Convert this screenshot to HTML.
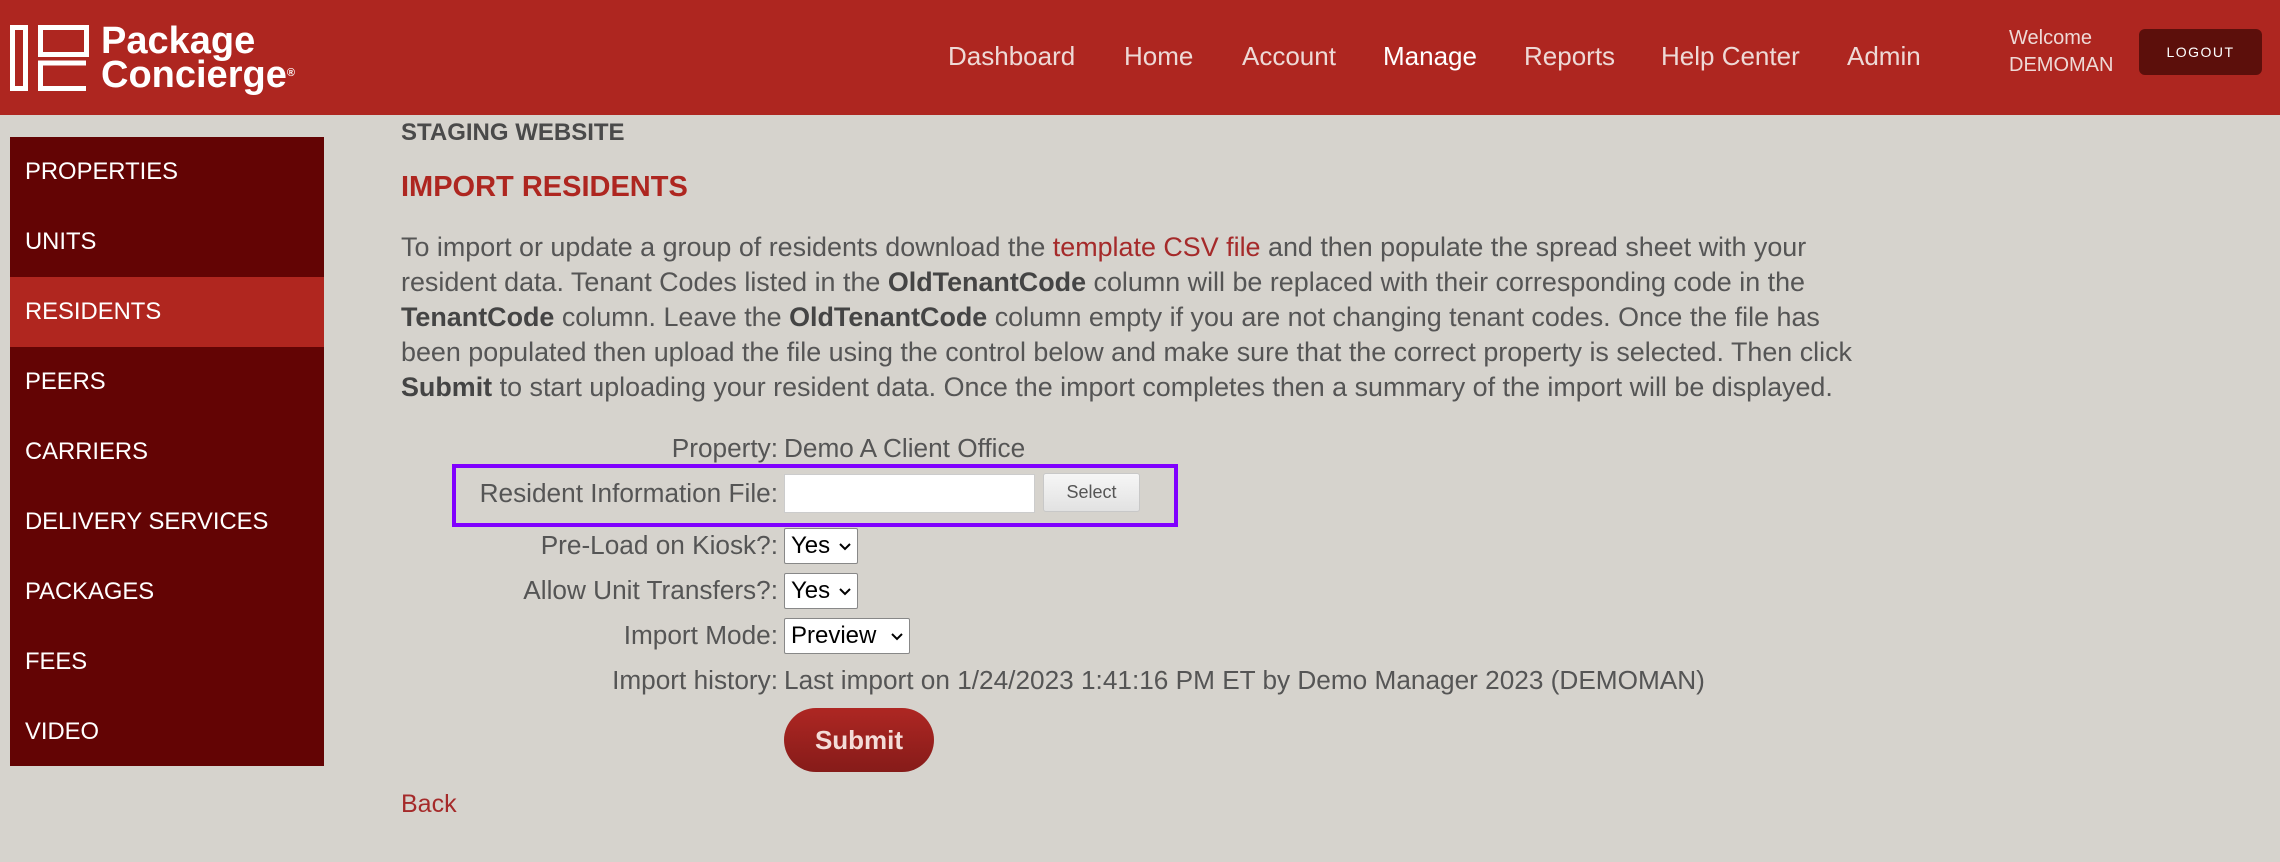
<!DOCTYPE html>
<html><head><meta charset="utf-8"><style>
*{margin:0;padding:0;box-sizing:border-box}
body{width:2280px;height:862px;background:#d6d3cd;font-family:"Liberation Sans",sans-serif;position:relative;overflow:hidden;color:#555}
.hdr{position:absolute;left:0;top:0;width:2280px;height:115px;background:#ae2620}
.a{position:absolute;white-space:nowrap}
.nav{font-size:26px;color:#eed9d6;top:41px}
.side{position:absolute;left:10px;top:137px;width:314px;height:629px;background:#630404}
.side div{height:70px;line-height:70px;padding-left:15px;color:#fff;font-size:23.8px}
.side .on{background:#b0261f}
p.t{position:absolute;left:401px;top:230px;width:1465px;font-size:26.9px;line-height:35px;color:#555}
p.t b{color:#444}
.lbl{font-size:26.2px;color:#555;text-align:right;right:1502px}
.val{font-size:26.2px;color:#555;left:784px}
.sel{position:absolute;left:784px;background:#fff;border:1px solid #888;border-radius:2px;height:36px;font-size:24px;color:#000;line-height:34px;padding-left:6px}
.sel svg{position:absolute;right:6px;top:14px}
</style></head><body>
<div class="hdr">
<svg class="a" style="left:10px;top:25px" width="80" height="66" viewBox="0 0 80 66" fill="none" stroke="#fff" stroke-width="5">
<rect x="2.5" y="2.5" width="13" height="61"/><rect x="30.5" y="2.5" width="46" height="27"/><path d="M76 38H30.5V63.5H76"/></svg>
<div class="a" style="left:101px;top:24px;font-size:38px;font-weight:bold;color:#fff;line-height:34px">Package<br>Concierge<sup style="font-size:11px;vertical-align:top;position:relative;top:-2px">®</sup></div>
<div class="a nav" style="left:948px">Dashboard</div>
<div class="a nav" style="left:1124px">Home</div>
<div class="a nav" style="left:1242px">Account</div>
<div class="a nav" style="left:1383px;color:#fff">Manage</div>
<div class="a nav" style="left:1524px">Reports</div>
<div class="a nav" style="left:1661px">Help Center</div>
<div class="a nav" style="left:1847px">Admin</div>
<div class="a" style="left:2009px;top:25px;font-size:20px;line-height:27px;color:#eed9d6">Welcome<br>DEMOMAN</div>
<div class="a" style="left:2139px;top:29px;width:123px;height:46px;background:#5c0f0b;border-radius:6px;color:#fff;font-size:14px;letter-spacing:1.5px;text-align:center;line-height:46px">LOGOUT</div>
</div>
<div class="side"><div>PROPERTIES</div><div>UNITS</div><div class="on">RESIDENTS</div><div>PEERS</div><div>CARRIERS</div><div>DELIVERY SERVICES</div><div>PACKAGES</div><div>FEES</div><div>VIDEO</div></div>
<div class="a" style="left:401px;top:119px;font-size:24px;font-weight:bold;color:#4a4a4a">STAGING WEBSITE</div>
<div class="a" style="left:401px;top:171px;font-size:29px;font-weight:bold;color:#ae2620">IMPORT RESIDENTS</div>
<p class="t">To import or update a group of residents download the <span style="color:#a52a2a">template CSV file</span> and then populate the spread sheet with your resident data. Tenant Codes listed in the <b>OldTenantCode</b> column will be replaced with their corresponding code in the <b>TenantCode</b> column. Leave the <b>OldTenantCode</b> column empty if you are not changing tenant codes. Once the file has been populated then upload the file using the control below and make sure that the correct property is selected. Then click <b>Submit</b> to start uploading your resident data. Once the import completes then a summary of the import will be displayed.</p>
<div class="a lbl" style="top:433px">Property:</div><div class="a val" style="top:433px">Demo A Client Office</div>
<div class="a" style="left:452px;top:464px;width:726px;height:63px;border:4px solid #8000ff"></div>
<div class="a lbl" style="top:478px">Resident Information File:</div>
<div class="a" style="left:784px;top:474px;width:251px;height:39px;background:#fff;border:1px solid #ccc"></div>
<div class="a" style="left:1043px;top:473px;width:97px;height:39px;background:linear-gradient(#f6f6f6,#e2e2e2);border:1px solid #c8c8c8;border-radius:3px;font-size:18px;color:#555;text-align:center;line-height:37px">Select</div>
<div class="a lbl" style="top:530px">Pre-Load on Kiosk?:</div><div class="sel" style="top:528px;width:74px">Yes<svg width="12" height="8"><path d="M1 1l5 5 5-5" stroke="#000" stroke-width="2" fill="none"/></svg></div>
<div class="a lbl" style="top:575px">Allow Unit Transfers?:</div><div class="sel" style="top:573px;width:74px">Yes<svg width="12" height="8"><path d="M1 1l5 5 5-5" stroke="#000" stroke-width="2" fill="none"/></svg></div>
<div class="a lbl" style="top:620px">Import Mode:</div><div class="sel" style="top:618px;width:126px">Preview<svg width="12" height="8"><path d="M1 1l5 5 5-5" stroke="#000" stroke-width="2" fill="none"/></svg></div>
<div class="a lbl" style="top:665px">Import history:</div><div class="a val" style="top:665px">Last import on 1/24/2023 1:41:16 PM ET by Demo Manager 2023 (DEMOMAN)</div>
<div class="a" style="left:784px;top:708px;width:150px;height:64px;border-radius:32px;background:linear-gradient(#ae2723,#861b19);color:#f3dcd8;font-weight:bold;font-size:26px;text-align:center;line-height:64px">Submit</div>
<div class="a" style="left:401px;top:790px;font-size:25px;color:#a52a2a">Back</div>
</body></html>
